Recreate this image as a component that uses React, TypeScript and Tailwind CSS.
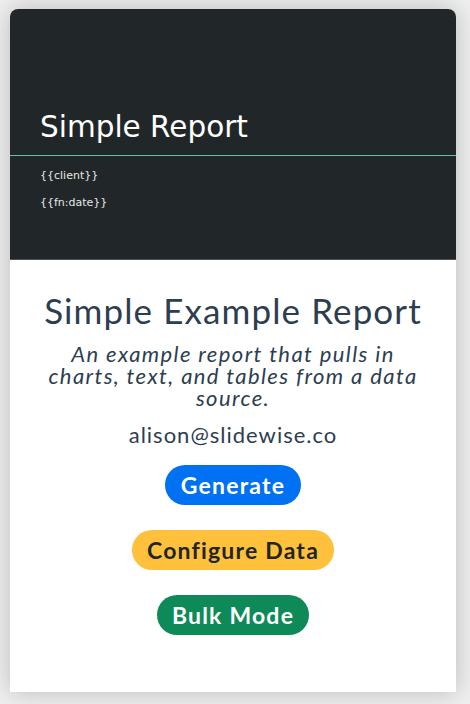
export default function App() {
  return (
    <div className="min-h-screen bg-[#efefef] pt-[9px] pl-[10px]">
      <div className="flex h-[683px] w-[446px] flex-col overflow-hidden rounded-t-[8px] bg-white shadow-[0_0_24px_rgba(0,0,0,0.22)]">
        <div className="h-[251px] border-b border-[#4b5355] bg-[#212729] pt-[100px] font-['DejaVu_Sans',sans-serif]">
          <div className="border-b border-[#62c39a] pb-[10px] pl-[30px] text-[29.5px] leading-[36px] text-white">
            Simple Report
          </div>
          <div className="pt-[6px] pl-[30px] text-[11px] leading-[27px] text-[#e6e6e6]">
            <div>{'{{client}}'}</div>
            <div>{'{{fn:date}}'}</div>
          </div>
        </div>
        <div className="flex flex-col items-center pt-[28px] text-center font-['Lato',sans-serif] text-[#2c3e50]">
          <h1 className="text-[35px] leading-[44px] font-normal tracking-[1.1px]">Simple Example Report</h1>
          <p className="mt-[11px] max-w-[395px] text-[22px] leading-[22px] font-normal italic tracking-[1.4px]">
            An example report that pulls in charts, text, and tables from a data source.
          </p>
          <p className="mt-[13px] text-[22px] leading-[26px] font-normal tracking-[1px]">alison@slidewise.co</p>
          <div className="mt-[17px] flex flex-col items-center gap-[25px]">
            <button className="h-[40px] w-[136px] rounded-full bg-[#0071f2] text-[23px] font-bold tracking-[1.2px] text-white">
              Generate
            </button>
            <button className="h-[40px] w-[202px] rounded-full bg-[#ffc13b] text-[23px] font-bold tracking-[1.2px] text-[#212529]">
              Configure Data
            </button>
            <button className="h-[40px] w-[152px] rounded-full bg-[#0e8a59] text-[23px] font-bold tracking-[1.2px] text-white">
              Bulk Mode
            </button>
          </div>
        </div>
      </div>
    </div>
  )
}
